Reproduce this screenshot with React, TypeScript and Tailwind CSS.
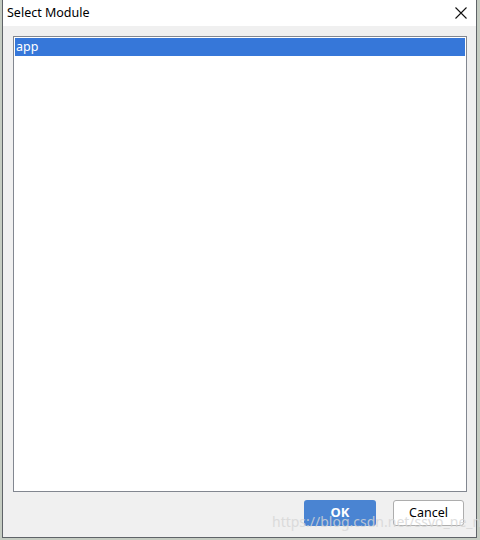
import React from "react";

export default function App() {
  return (
    <div
      className="w-[480px] h-[540px] bg-[#c5ccc2] overflow-hidden relative"
      style={{ fontFamily: '"Noto Sans", "Open Sans", sans-serif' }}
    >
      <div className="ml-[2px] w-[475px] h-[538px] border border-t-0 border-[#5f6368] flex flex-col">
        <div className="h-[26px] bg-white flex items-center justify-between pl-[4px] pr-[8px]">
          <span className="text-[12.5px] text-[#000] leading-none">Select Module</span>
          <svg width="12" height="12" viewBox="0 0 12 12" className="mr-[1px]">
            <path d="M0.5 0.5 L11.5 11.5 M11.5 0.5 L0.5 11.5" stroke="#111" strokeWidth="1.1" />
          </svg>
        </div>
        <div className="flex-1 bg-[#f0f0f0] flex flex-col pt-[10px] pl-[10px] pr-[9px] pb-[11px]">
          <div className="h-[456px] border border-[#828790] bg-white p-[1px]">
            <div className="h-[18px] bg-[#3677d9] flex items-center pl-[1px]">
              <span className="text-[12.5px] text-white leading-none">app</span>
            </div>
          </div>
          <div className="mt-[8px] flex justify-end gap-[17px] pr-[3px]">
            <button className="w-[72px] h-[26px] rounded-[3px] bg-[#4a84d2] text-white text-[13px] font-bold flex items-center justify-center">
              OK
            </button>
            <button className="w-[71px] h-[26px] rounded-[3px] bg-white border border-[#adadad] text-[#000] text-[12.5px] flex items-center justify-center">
              Cancel
            </button>
          </div>
        </div>
      </div>
      <div className="absolute left-[272px] top-[511px] text-[14px] text-[#d6d6d6] opacity-80 pointer-events-none whitespace-nowrap">
        https://blog.csdn.net/ssvo_ne_n
      </div>
    </div>
  );
}
